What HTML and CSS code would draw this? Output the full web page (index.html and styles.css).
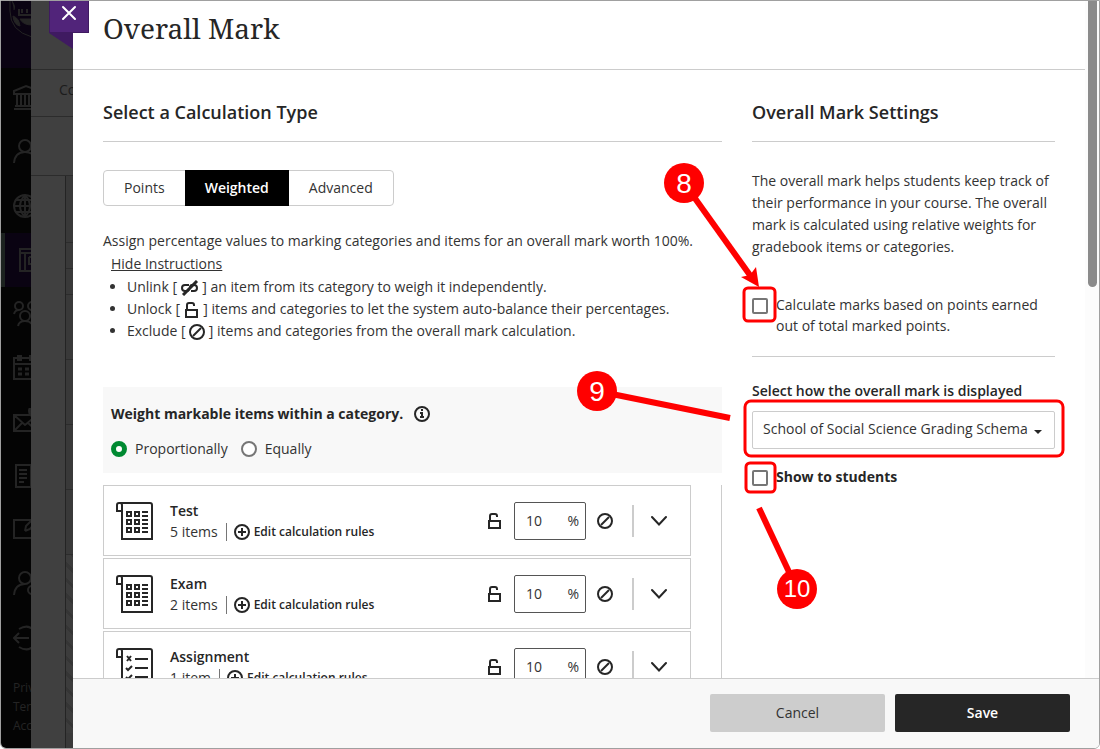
FILE: index.html
```
<!DOCTYPE html>
<html lang="en">
<head>
    <meta charset="UTF-8">
    <meta name="viewport" content="width=device-width, initial-scale=1.0">
    <title>Overall Mark</title>
    <link rel="stylesheet" href="styles.css">
</head>
<body>

<!-- Shared icons -->
<svg class="icon-defs" aria-hidden="true">
    <symbol id="icon-unlock" viewBox="0 0 16 16">
        <path d="M3 8V3Q3 1 5 1H8Q10 1 10 3V4" fill="none" stroke="currentColor" stroke-width="2"/>
        <rect x="2" y="8" width="11" height="7" fill="none" stroke="currentColor" stroke-width="2"/>
    </symbol>
    <symbol id="icon-exclude" viewBox="0 0 16 16">
        <circle cx="8" cy="8" r="7" fill="none" stroke="currentColor" stroke-width="2"/>
        <path d="M4 12L12 4" stroke="currentColor" stroke-width="2"/>
    </symbol>
    <symbol id="icon-unlink" viewBox="0 0 18 16">
        <path d="M8 5H4Q1 5 1 8Q1 11 4 11H6Q8 11 8 8M10 11H13Q16 11 16 8Q16 5 13 5H11Q9 5 9 8" fill="none" stroke="currentColor" stroke-width="2"/>
        <path d="M2 15L16 1" stroke="currentColor" stroke-width="3"/>
    </symbol>
    <symbol id="icon-add" viewBox="0 0 16 16">
        <circle cx="8" cy="8" r="7" fill="none" stroke="currentColor" stroke-width="2"/>
        <path d="M8 4V12M4 8H12" stroke="currentColor" stroke-width="2"/>
    </symbol>
    <symbol id="icon-info" viewBox="0 0 16 16">
        <circle cx="8" cy="8" r="7" fill="none" stroke="currentColor" stroke-width="2"/>
        <path d="M7 3H9V5H7ZM6 6H9V10H10V12H6V10H7V8H6Z" fill="currentColor"/>
    </symbol>
    <symbol id="icon-chevron" viewBox="0 0 16 16">
        <path d="M1 4L8 11.500L15 4" fill="none" stroke="currentColor" stroke-width="2" stroke-linecap="round"/>
    </symbol>
    <symbol id="icon-test" viewBox="0 0 38 38">
        <path d="M3 1H34Q36 1 36 3V37H6V3Q6 1 4 1H3Q1 1 1 3V9H6" fill="none" stroke="currentColor" stroke-width="2"/>
        <path d="M11 10H15V14H11ZM19 10H23V14H19ZM11 18H15V22H11ZM19 18H23V22H19ZM11 26H15V30H11ZM19 26H23V30H19Z" fill="none" stroke="currentColor" stroke-width="2"/>
        <path d="M26 10H32M26 14H32M26 18H32M26 22H32M26 26H32M26 30H32" stroke="currentColor" stroke-width="2"/>
    </symbol>
    <symbol id="icon-assignment" viewBox="0 0 38 38">
        <path d="M3 1H34Q36 1 36 3V37H6V3Q6 1 4 1H3Q1 1 1 3V9H6" fill="none" stroke="currentColor" stroke-width="2"/>
        <path d="M11 8L15 13M15 8L11 13M10 20L12 22L16 18M10 29L12 31L16 27" fill="none" stroke="currentColor" stroke-width="2"/>
        <path d="M19 11H32M19 20H32M19 29H32" stroke="currentColor" stroke-width="2"/>
    </symbol>
</svg>

<div class="frame">
    <!-- Global navigation behind the panel -->
    <nav class="base-nav">
        <div class="logo">
            <svg width="52" height="67" viewBox="0 0 52 67" fill="none" stroke="#242424">
                <path d="M9 0V10Q9 30 31 36" stroke-width="1"/>
                <path d="M18 8V14H31M21 8V12M26 8V12" stroke-width="2"/>
                <path d="M12 15Q18 17 19 25Q13 24 12 15ZM11 0Q15 5 13 9M19 18H31V24Q22 24 19 18Z" fill="#242424"/>
            </svg>
        </div>
        <a href="#" aria-label="Institution"><svg viewBox="0 0 28 28"><path d="M1 10V7L13 2L26 7V10ZM4 11V21M8 11V21M12 11V21M16 11V21M20 11V21M2 22H26M1 25H27"/></svg></a>
        <a href="#" aria-label="Profile"><svg viewBox="0 0 28 28"><circle cx="12" cy="8" r="6"/><path d="M1 25Q2 14 12 14Q22 14 24 25"/></svg></a>
        <a href="#" aria-label="Activity"><svg viewBox="0 0 28 28"><circle cx="12" cy="14" r="11"/><path d="M12 3V25M1 14H23M3 8H21M3 20H21M12 3Q2 14 12 25M12 3Q22 14 12 25"/></svg></a>
        <a href="#" aria-label="Courses" class="active"><svg viewBox="0 0 28 28"><path d="M7 3H27V25H7ZM12 7V25M7 7H27M16 11H22M16 11V18H22"/></svg></a>
        <a href="#" aria-label="Organisations"><svg viewBox="0 0 28 28"><circle cx="6" cy="6" r="4"/><circle cx="19" cy="6" r="4"/><circle cx="12" cy="16" r="5"/><path d="M1 14Q2 10 6 10M5 26Q6 21 12 21Q18 21 20 26"/></svg></a>
        <a href="#" aria-label="Calendar"><svg viewBox="0 0 28 28"><path d="M1 4H26V25H1ZM1 10H26M5 2V6H8V2ZM17 2V6H20V2Z"/><path d="M5 15H9M12 15H16M19 15H23M5 20H9M12 20H16M19 20H23" stroke-width="3"/></svg></a>
        <a href="#" aria-label="Messages"><svg viewBox="0 0 28 28"><path d="M1 7H26V23H1ZM1 7L12 17L24 7M1 23L9 15M24 23L15 15"/><circle cx="22" cy="3" r="6" fill="#242424"/></svg></a>
        <a href="#" aria-label="Marks"><svg viewBox="0 0 28 28"><path d="M3 3H18V25H3ZM6 8H14M6 12H14M6 16H14M6 20H11"/></svg></a>
        <a href="#" aria-label="Tools"><svg viewBox="0 0 28 28"><path d="M18 4H1V22H20V14M12 15L13 10L20 3M12 15L17 13L22 7"/></svg></a>
        <a href="#" aria-label="Admin"><svg viewBox="0 0 28 28"><circle cx="12" cy="8" r="6"/><path d="M1 25Q2 14 12 14"/><circle cx="19" cy="20" r="4"/></svg></a>
        <a href="#" aria-label="Sign out"><svg viewBox="0 0 28 28"><path d="M6 5Q16 -1 22 8M6 23Q16 29 22 20M1 14H16M6 9L1 14L6 19"/></svg></a>
        <div class="nav-links">
            <a href="#">Privacy</a>
            <a href="#">Terms</a>
            <a href="#">Accessibility</a>
        </div>
    </nav>

    <!-- Course page behind the panel -->
    <div class="course-page">
        <div class="course-head"></div>
        <div class="course-tabs">Content</div>
        <div class="course-bar"></div>
        <div class="course-grid">
            <div class="cell tall"></div>
            <div class="cell short"></div>
            <div class="cell short"></div>
            <div class="cell"></div>
            <div class="cell"></div>
            <div class="cell"></div>
            <div class="cell"></div>
            <div class="cell hatched"></div>
        </div>
    </div>

    <!-- Overall mark panel -->
    <main class="panel">
        <button type="button" class="close" aria-label="Close">
            <svg width="16" height="16" viewBox="0 0 16 16"><path d="M2 2L14 14M14 2L2 14" stroke="#fff" stroke-width="2" stroke-linecap="round"/></svg>
        </button>

        <div class="panel-body">
            <div class="panel-content">
                <header class="panel-header">
                    <h1>Overall Mark</h1>
                </header>

                <div class="columns">
                    <section class="calculation">
                        <h2>Select a Calculation Type</h2>

                        <div class="tabs">
                            <button type="button">Points</button>
                            <button type="button" class="selected">Weighted</button>
                            <button type="button">Advanced</button>
                        </div>

                        <p>Assign percentage values to marking categories and items for an overall mark worth 100%.</p>
                        <a href="#" class="hide-link">Hide Instructions</a>
                        <ul class="instructions">
                            <li>Unlink [ <svg class="unlink"><use href="#icon-unlink"/></svg> ] an item from its category to weigh it independently.</li>
                            <li>Unlock [ <svg><use href="#icon-unlock"/></svg> ] items and categories to let the system auto-balance their percentages.</li>
                            <li>Exclude [ <svg><use href="#icon-exclude"/></svg> ] items and categories from the overall mark calculation.</li>
                        </ul>

                        <div class="weighting">
                            <div class="weighting-title">
                                Weight markable items within a category.
                                <svg class="icon"><use href="#icon-info"/></svg>
                            </div>
                            <div class="radios">
                                <label><input type="radio" name="weighting" checked>Proportionally</label>
                                <label><input type="radio" name="weighting">Equally</label>
                            </div>
                        </div>

                        <div class="categories">
                            <div class="category">
                                <svg class="category-icon"><use href="#icon-test"/></svg>
                                <div class="category-info">
                                    <h3>Test</h3>
                                    <div class="category-meta">
                                        <span class="count">5 items</span>
                                        <button type="button" class="edit"><svg class="icon"><use href="#icon-add"/></svg>Edit calculation rules</button>
                                    </div>
                                </div>
                                <button type="button" class="icon-button" aria-label="Unlock Test"><svg class="icon"><use href="#icon-unlock"/></svg></button>
                                <label class="percent"><input type="text" value="10" aria-label="Test percentage">%</label>
                                <button type="button" class="icon-button" aria-label="Exclude Test"><svg class="icon"><use href="#icon-exclude"/></svg></button>
                                <button type="button" class="expand" aria-label="Expand Test"><svg class="icon"><use href="#icon-chevron"/></svg></button>
                            </div>

                            <div class="category">
                                <svg class="category-icon"><use href="#icon-test"/></svg>
                                <div class="category-info">
                                    <h3>Exam</h3>
                                    <div class="category-meta">
                                        <span class="count">2 items</span>
                                        <button type="button" class="edit"><svg class="icon"><use href="#icon-add"/></svg>Edit calculation rules</button>
                                    </div>
                                </div>
                                <button type="button" class="icon-button" aria-label="Unlock Exam"><svg class="icon"><use href="#icon-unlock"/></svg></button>
                                <label class="percent"><input type="text" value="10" aria-label="Exam percentage">%</label>
                                <button type="button" class="icon-button" aria-label="Exclude Exam"><svg class="icon"><use href="#icon-exclude"/></svg></button>
                                <button type="button" class="expand" aria-label="Expand Exam"><svg class="icon"><use href="#icon-chevron"/></svg></button>
                            </div>

                            <div class="category">
                                <svg class="category-icon"><use href="#icon-assignment"/></svg>
                                <div class="category-info">
                                    <h3>Assignment</h3>
                                    <div class="category-meta">
                                        <span class="count">1 item</span>
                                        <button type="button" class="edit"><svg class="icon"><use href="#icon-add"/></svg>Edit calculation rules</button>
                                    </div>
                                </div>
                                <button type="button" class="icon-button" aria-label="Unlock Assignment"><svg class="icon"><use href="#icon-unlock"/></svg></button>
                                <label class="percent"><input type="text" value="10" aria-label="Assignment percentage">%</label>
                                <button type="button" class="icon-button" aria-label="Exclude Assignment"><svg class="icon"><use href="#icon-exclude"/></svg></button>
                                <button type="button" class="expand" aria-label="Expand Assignment"><svg class="icon"><use href="#icon-chevron"/></svg></button>
                            </div>
                        </div>
                    </section>

                    <section class="settings">
                        <h2>Overall Mark Settings</h2>
                        <p>The overall mark helps students keep track of their performance in your course. The overall mark is calculated using relative weights for gradebook items or categories.</p>
                        <label class="check points-check"><input type="checkbox"><span>Calculate marks based on points earned out of total marked points.</span></label>

                        <label class="select-label" for="schema">Select how the overall mark is displayed</label>
                        <div class="select-box">
                            <select id="schema">
                                <option>School of Social Science Grading Schema</option>
                            </select>
                            <svg class="caret" width="8" height="4" viewBox="0 0 8 4"><path d="M0 0H8L4 4Z" fill="#262626"/></svg>
                        </div>
                        <label class="check show-check"><input type="checkbox"><span>Show to students</span></label>
                    </section>
                </div>
            </div>
            <div class="scrollbar"><div class="thumb"></div></div>
        </div>

        <footer class="panel-footer">
            <button type="button" class="cancel">Cancel</button>
            <button type="button" class="save">Save</button>
        </footer>
    </main>
</div>

<!-- Step callouts drawn over the page -->
<svg class="callouts" width="1100" height="749" viewBox="0 0 1100 749">
    <g fill="none" stroke="#f00" stroke-width="3">
        <rect x="744" y="288" width="31" height="33" rx="4"/>
        <rect x="745" y="401" width="318" height="55" rx="6"/>
        <rect x="746" y="463" width="29" height="29" rx="4"/>
    </g>
    <g stroke="#f00" stroke-width="6">
        <path d="M684 183L752 278"/>
        <path d="M597 391L730 418"/>
        <path d="M797 589L759 508"/>
    </g>
    <g fill="#f00">
        <path d="M759 287L741 277L750 275L756 267Z"/>
        <circle cx="684" cy="183" r="20"/>
        <circle cx="597" cy="391" r="20"/>
        <circle cx="797" cy="589" r="20"/>
    </g>
    <g class="callout-text">
        <text x="684" y="193">8</text>
        <text x="597" y="401">9</text>
        <text x="797" y="597" class="small">10</text>
    </g>
</svg>

</body>
</html>
```
FILE: styles.css
```
* {
    box-sizing: border-box;
    margin: 0;
    padding: 0;
}

body {
    font-family: "Open Sans", "Noto Sans", sans-serif;
    font-size: 14px;
    line-height: 22px;
    color: #333;
    background-color: #fff;
}

button,
input,
select {
    font: inherit;
    color: inherit;
}

button {
    border: none;
    background: none;
    cursor: pointer;
}

a {
    color: inherit;
}

.icon-defs {
    display: none;
}

.icon {
    display: block;
    width: 16px;
    height: 16px;
    color: #262626;
    flex: none;
}

.frame {
    display: flex;
    height: 100vh;
    border: 1px solid #a0a0a0;
    border-radius: 0 0 6px 6px;
    overflow: hidden;
}

/* Global navigation */
.base-nav {
    width: 30px;
    flex: none;
    background-color: #040404;
    overflow: hidden;
}

.logo {
    height: 67px;
    margin-bottom: 3px;
    background-color: #0a0312;
}

.base-nav > a {
    display: flex;
    align-items: center;
    height: 54px;
    padding-left: 12px;
}

.base-nav > a.active {
    padding-left: 8px;
    border-left: 4px solid #1c221f;
    background-color: #0a0312;
}

.base-nav > a svg {
    width: 28px;
    height: 28px;
    flex: none;
    fill: none;
    stroke: #242424;
    stroke-width: 2;
}

.nav-links {
    padding: 13px 0 0 12px;
    width: 120px;
    font-size: 12px;
    line-height: 19px;
    color: #242424;
}

.nav-links a {
    display: block;
    text-decoration: none;
}

/* Course page */
.course-page {
    display: flex;
    flex-direction: column;
    width: 42px;
    flex: none;
    background-color: #404040;
    overflow: hidden;
}

.course-head {
    height: 69px;
    flex: none;
    border-bottom: 1px solid #2c2c2c;
}

.course-tabs {
    height: 47px;
    flex: none;
    padding: 9px 0 0 28px;
    color: #1c1c1c;
    border-bottom: 1px solid #2c2c2c;
}

.course-bar {
    height: 59px;
    flex: none;
    border-bottom: 1px solid #2c2c2c;
}

.course-grid {
    display: flex;
    flex-direction: column;
    flex: 1;
    margin-left: 34px;
    padding-bottom: 15px;
    border-left: 1px solid #242424;
    background-color: #393939;
}

.cell {
    height: 65px;
    flex: none;
    border-bottom: 1px solid #2c2c2c;
}

.cell.tall {
    height: 67px;
}

.cell.short {
    height: 26px;
}

.cell.hatched {
    flex: 1;
    border-bottom: none;
    background: repeating-linear-gradient(45deg, #3c3c3c 0 8px, #353535 8px 11px);
}

/* Panel */
.panel {
    position: relative;
    display: flex;
    flex-direction: column;
    flex: 1;
    min-width: 0;
    background-color: #fff;
}

.close {
    position: absolute;
    top: 0;
    left: -24px;
    width: 40px;
    height: 32px;
    background-color: #51247a;
    border: 1px solid #3f1a61;
    border-top: none;
}

.close svg {
    display: block;
    margin: -8px auto 0;
}

.close::after {
    content: "";
    position: absolute;
    top: 32px;
    left: -1px;
    width: 24px;
    height: 16px;
    background-color: #3f1a61;
    clip-path: polygon(0 0, 100% 0, 100% 100%);
}

.panel-body {
    display: flex;
    flex: 1;
    min-height: 0;
}

.panel-content {
    flex: 1;
    min-width: 0;
    overflow: hidden;
}

.scrollbar {
    width: 14px;
    padding-left: 3px;
    background-color: #fcfcfc;
}

.thumb {
    width: 9px;
    height: 286px;
    border-radius: 0 0 5px 5px;
    background-color: #8b8b8b;
}

.panel-header {
    height: 69px;
    padding: 8px 30px 0;
    border-bottom: 1px solid #ccc;
}

h1 {
    font-family: "Noto Serif", "DejaVu Serif", serif;
    font-size: 28px;
    font-weight: normal;
    line-height: 38px;
    color: #262626;
}

.columns {
    display: grid;
    grid-template-columns: minmax(0, 1fr) 303px;
    gap: 30px;
    padding: 30px 30px 0;
}

h2 {
    margin-bottom: 28px;
    padding-bottom: 17px;
    border-bottom: 1px solid #ccc;
    font-size: 18px;
    font-weight: 600;
    line-height: 24px;
    color: #262626;
}

.tabs {
    display: flex;
    width: fit-content;
    height: 36px;
    margin-bottom: 24px;
    border: 1px solid #ccc;
    border-radius: 4px;
}

.tabs button {
    padding: 0 20px;
}

.tabs .selected {
    margin: -1px 0;
    font-weight: 600;
    color: #fff;
    background-color: #000;
}

.hide-link {
    display: block;
    width: fit-content;
    margin-left: 8px;
    line-height: 24px;
}

.instructions {
    margin-bottom: 45px;
    padding-left: 24px;
}

.instructions li {
    height: 22px;
}

.instructions svg {
    width: 16px;
    height: 16px;
    vertical-align: -4px;
    color: #262626;
}

.instructions .unlink {
    width: 18px;
}

/* Weighting options */
.weighting {
    padding: 16px 8px 13px;
    background-color: #f8f8f8;
}

.weighting-title {
    display: flex;
    align-items: center;
    gap: 11px;
    margin-bottom: 13px;
    font-weight: bold;
    color: #262626;
}

.radios {
    display: flex;
    gap: 13px;
}

.radios label {
    display: flex;
    align-items: center;
    gap: 8px;
}

.radios input {
    appearance: none;
    width: 16px;
    height: 16px;
    border: 2px solid #767676;
    border-radius: 50%;
    background-color: #fff;
}

.radios input:checked {
    border: 5px solid #008a32;
}

/* Category list */
.categories {
    display: grid;
    gap: 2px;
    margin-top: 12px;
    padding-right: 30px;
    border-right: 1px solid #ccc;
}

.category {
    display: flex;
    align-items: center;
    height: 71px;
    padding: 0 23px 0 12px;
    border: 1px solid #ccc;
}

.category-icon {
    width: 38px;
    height: 38px;
    flex: none;
    color: #262626;
}

.category-info {
    flex: 1;
    margin-left: 16px;
}

h3 {
    font-size: 14px;
    font-weight: 600;
    line-height: 22px;
    color: #262626;
}

.category-meta {
    display: flex;
    align-items: center;
    height: 20px;
}

.count {
    padding-right: 8px;
    border-right: 1px solid #767676;
    line-height: 18px;
}

.edit {
    display: flex;
    align-items: center;
    gap: 4px;
    margin-left: 7px;
    font-size: 12px;
    font-weight: 600;
    color: #262626;
}

.percent {
    display: flex;
    align-items: center;
    width: 72px;
    height: 38px;
    margin: 0 11px;
    padding: 0 6px 0 11px;
    border: 1px solid #555;
    border-radius: 2px;
}

.percent input {
    flex: 1;
    min-width: 0;
    border: none;
    outline: none;
    background: none;
}

.expand {
    height: 32px;
    margin-left: 19px;
    padding-left: 17px;
    border-left: 2px solid #ccc;
}

/* Settings column */
.check {
    display: flex;
    gap: 8px;
}

.check input {
    appearance: none;
    flex: none;
    width: 16px;
    height: 16px;
    margin-top: 4px;
    border: 2px solid #767676;
    border-radius: 2px;
    background-color: #fff;
}

.points-check {
    margin-top: 36px;
    padding-bottom: 20px;
    border-bottom: 1px solid #ccc;
    line-height: 21px;
}

.select-label {
    display: block;
    margin: 23px 0 9px;
    font-weight: 600;
    color: #262626;
}

.select-box {
    position: relative;
}

.select-box select {
    display: block;
    appearance: none;
    width: 100%;
    height: 38px;
    padding: 0 24px 2px 10px;
    border: 1px solid #ccc;
    border-radius: 2px;
    background-color: #fff;
}

.caret {
    position: absolute;
    right: 13px;
    top: 19px;
}

.show-check {
    margin-top: 17px;
    font-weight: bold;
    color: #262626;
}

/* Footer */
.panel-footer {
    display: flex;
    justify-content: flex-end;
    gap: 10px;
    padding: 15px 29px 16px;
    border-top: 1px solid #ccc;
    background-color: #f8f8f8;
}

.panel-footer button {
    width: 175px;
    height: 38px;
    border-radius: 2px;
}

.cancel {
    background-color: #cdcdcd;
}

.save {
    font-weight: 600;
    color: #fff;
    background-color: #262626;
}

/* Callouts */
.callouts {
    position: absolute;
    top: 0;
    left: 0;
    pointer-events: none;
}

.callout-text {
    font-family: "Liberation Sans", Arial, sans-serif;
    font-size: 28px;
    fill: #fff;
    text-anchor: middle;
}

.callout-text .small {
    font-size: 24px;
}
```
